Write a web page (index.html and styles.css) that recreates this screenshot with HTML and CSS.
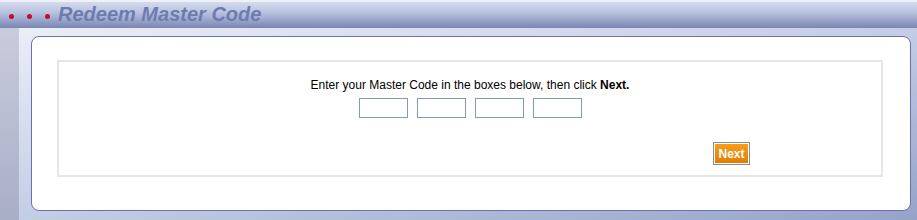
FILE: index.html
```html
<!DOCTYPE html>
<html lang="en">
<head>
    <meta charset="UTF-8">
    <meta name="viewport" content="width=device-width, initial-scale=1.0">
    <title>Redeem Master Code</title>
    <link rel="stylesheet" href="styles.css">
</head>
<body>
    <section class="page">
        <div class="header">
            <div class="dots">
                <span class="dot"></span>
                <span class="dot"></span>
                <span class="dot"></span>
            </div>
            <h1 class="title">Redeem Master Code</h1>
        </div>
        <div class="main">
            <div class="side"></div>
            <div class="content">
                <div class="card">
                    <div class="box">
                        <p class="intro">Enter your Master Code in the boxes below, then click <b>Next.</b></p>
                        <div class="codes">
                            <input class="code" type="text" maxlength="4">
                            <input class="code" type="text" maxlength="4">
                            <input class="code" type="text" maxlength="4">
                            <input class="code" type="text" maxlength="4">
                        </div>
                        <div class="actions">
                            <button class="next">Next</button>
                        </div>
                    </div>
                </div>
            </div>
        </div>
    </section>
</body>
</html>
```

FILE: styles.css
```css
*{
    margin: 0;
    padding: 0;
    box-sizing: border-box;
}
body{
    font-family: "Liberation Sans", Arial, sans-serif;
    font-size: 12px;
    color: #000;
    background: #bccbe6;
}
.page{
    width: 917px;
    height: 220px;
    display: flex;
    flex-direction: column;
    overflow: hidden;
}
.header{
    height: 28px;
    display: flex;
    align-items: center;
    border-top: 2px solid #eef1f8;
    background: linear-gradient(180deg, #d3dbec 0%, #b9c3de 40%, #8f9ac3 80%, #7a86b3 100%);
}
.dots{
    display: flex;
    gap: 13px;
    padding-left: 9px;
    padding-top: 2px;
}
.dot{
    width: 5px;
    height: 5px;
    border-radius: 50%;
    background: #c10f2a;
}
.title{
    margin-left: 8px;
    font-size: 20px;
    font-weight: bold;
    font-style: italic;
    color: #6f7bb0;
    line-height: 1;
    margin-top: -2px;
}
.main{
    flex: 1;
    display: flex;
}
.side{
    width: 19px;
    background: linear-gradient(180deg, #c8ccdc 0%, #a9aec7 100%);
}
.content{
    flex: 1;
    padding: 8px 6px 9px 12px;
    background: linear-gradient(to bottom right, #eaeef7 0%, #c3cde6 50%, #96a2c9 100%);
}
.card{
    height: 100%;
    background: #fff;
    border: 1px solid #6a73a8;
    border-radius: 8px;
    padding: 23px 27px 33px 25px;
}
.box{
    height: 100%;
    border: 2px solid #e6e6e6;
    padding-top: 16px;
    display: flex;
    flex-direction: column;
    align-items: center;
}
.intro{
    line-height: 14px;
}
.codes{
    display: flex;
    gap: 9px;
    margin-top: 6px;
}
.code{
    width: 49px;
    height: 20px;
    border: 1px solid #7f9db9;
    font-family: inherit;
    font-size: 12px;
    padding: 0 3px;
}
.actions{
    align-self: stretch;
    display: flex;
    justify-content: flex-end;
    padding-right: 131px;
    margin-top: 24px;
}
.next{
    width: 37px;
    height: 23px;
    border: 1px solid #8c8c8c;
    box-shadow: inset 0 0 0 1px #fff;
    background: linear-gradient(180deg, #f7a01c 0%, #e07c00 100%);
    color: #fff;
    font-family: inherit;
    font-size: 12px;
    font-weight: bold;
    cursor: pointer;
}
```
